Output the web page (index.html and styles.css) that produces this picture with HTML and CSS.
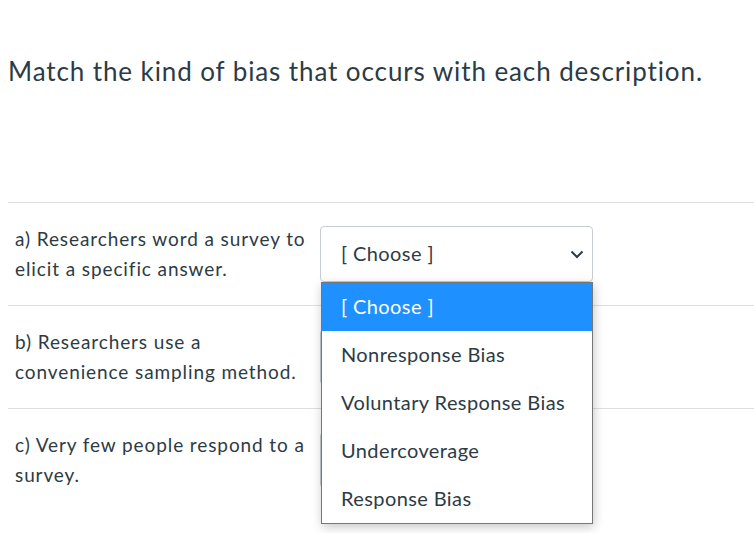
FILE: index.html
```html
<!DOCTYPE html>
<html>
<head>
<meta charset="utf-8">
<link rel="stylesheet" href="styles.css">
</head>
<body>
<div class="quiz">
  <h2 class="title">Match the kind of bias that occurs with each description.</h2>
  <div class="rows">
    <div class="row">
      <div class="label">a) Researchers word a survey to elicit a specific answer.</div>
      <div class="select">
        <span>[ Choose ]</span>
        <svg class="chev" width="14" height="9" viewBox="0 0 14 9"><path d="M1.5 1.5 L7 7 L12.5 1.5" fill="none" stroke="#2d3b45" stroke-width="2"/></svg>
      </div>
    </div>
    <div class="row">
      <div class="label">b) Researchers use a convenience sampling method.</div>
      <div class="select"><span>[ Choose ]</span></div>
    </div>
    <div class="row">
      <div class="label">c) Very few people respond to a survey.</div>
      <div class="select"><span>[ Choose ]</span></div>
    </div>
  </div>
  <ul class="menu">
    <li class="opt active">[ Choose ]</li>
    <li class="opt">Nonresponse Bias</li>
    <li class="opt">Voluntary Response Bias</li>
    <li class="opt">Undercoverage</li>
    <li class="opt">Response Bias</li>
  </ul>
</div>
</body>
</html>
```

FILE: styles.css
```css
html, body {
  margin: 0;
  padding: 0;
  background: #fff;
}
body {
  font-family: Lato, "Open Sans", sans-serif;
  color: #2d3b45;
  width: 754px;
  height: 533px;
  overflow: hidden;
}
.quiz {
  position: relative;
  padding-left: 8px;
}
.title {
  margin: 0;
  padding-top: 56px;
  font-size: 26px;
  font-weight: 400;
  line-height: 1.2;
  letter-spacing: 0.9px;
}
.rows {
  margin-top: 115px;
}
.row {
  display: flex;
  align-items: flex-start;
  border-top: 1px solid #dcdee0;
  padding: 21px 0 21px 7px;
  height: 60px;
}
.label {
  width: 300px;
  margin-right: 5px;
  font-size: 19px;
  line-height: 30px;
  letter-spacing: 0.9px;
}
.select {
  box-sizing: border-box;
  margin-top: 2px;
  width: 273px;
  height: 56px;
  border: 1px solid #c7cdd1;
  border-radius: 4px;
  background: #fff;
  display: flex;
  align-items: center;
  justify-content: space-between;
  padding: 0 8px 2px 20px;
  font-size: 20px;
  letter-spacing: 0.4px;
}
.chev {
  display: block;
  margin-top: 2px;
}
.menu {
  position: absolute;
  left: 321px;
  top: 282px;
  width: 272px;
  margin: 0;
  padding: 0;
  list-style: none;
  box-sizing: border-box;
  border: 1px solid #767676;
  background: #fff;
  box-shadow: 1px 3px 10px rgba(0, 0, 0, 0.22);
}
.opt {
  height: 48px;
  line-height: 46px;
  padding-left: 19px;
  font-size: 20px;
  letter-spacing: 0.4px;
  color: #2d3b45;
}
.opt.active {
  background: #1e90ff;
  color: #fff;
}
```
